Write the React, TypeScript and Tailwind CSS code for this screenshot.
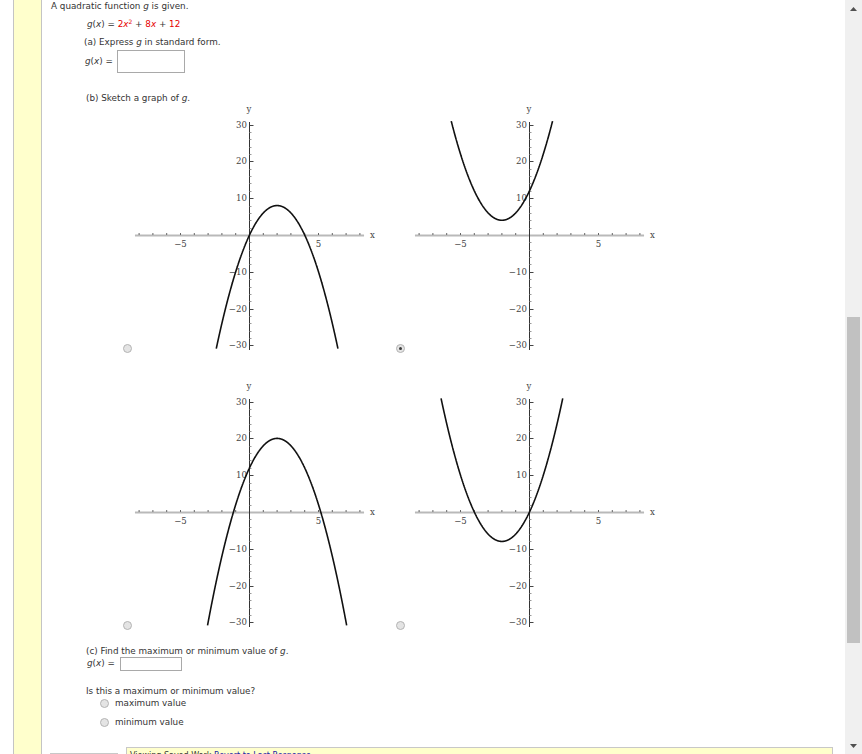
import React from "react";

type Fn = (x: number) => number;

// graph scale, read off the reference: 13.8px per x unit, 3.68px per y unit
const SX = 13.8;
const SY = 3.68;
const OX = 117.5;
const OY = 131;

const g1: Fn = (x) => -2 * x * x + 8 * x;
const g2: Fn = (x) => 2 * (x + 2) * (x + 2) + 4;
const g3: Fn = (x) => -2 * (x - 2) * (x - 2) + 20;
const g4: Fn = (x) => 2 * (x + 2) * (x + 2) - 8;

function curvePath(f: Fn) {
  const pts: string[] = [];
  for (let i = -840; i <= 840; i++) {
    const x = i / 100;
    const y = f(x);
    if (Math.abs(y) > 31) continue;
    pts.push(`${(OX + x * SX).toFixed(2)},${(OY - y * SY).toFixed(2)}`);
  }
  return "M" + pts.join("L");
}

function Graph({ f, className = "" }: { f: Fn; className?: string }) {
  const xTicks = [-8, -7, -6, -5, -4, -3, -2, -1, 1, 2, 3, 4, 5, 6, 7, 8];
  const yTicks: number[] = [];
  for (let v = -30; v <= 30; v += 2) if (v !== 0) yTicks.push(v);
  const yLabels = [30, 20, 10, -10, -20, -30];
  const font = "'DejaVu Serif', serif";

  return (
    <svg width={250} height={258} className={`block shrink-0 ${className}`}>
      {/* x axis */}
      <line x1={OX - 8.3 * SX} x2={OX + 8.3 * SX} y1={OY + 0.5} y2={OY + 0.5} stroke="#b9b9b9" strokeWidth={2} />
      {xTicks.map((v) => (
        <line key={v} x1={OX + v * SX} x2={OX + v * SX} y1={OY - 2} y2={OY} stroke="#666" strokeWidth={1} />
      ))}
      <text x={OX - 5 * SX} y={OY + 12} textAnchor="middle" fontFamily={font} fontSize={8.6} fill="#444">
        −5
      </text>
      <text x={OX + 5 * SX} y={OY + 12} textAnchor="middle" fontFamily={font} fontSize={8.6} fill="#444">
        5
      </text>
      <text x={OX + 120.5} y={OY + 3} fontFamily={font} fontSize={8.6} fill="#444">
        x
      </text>

      {/* y axis */}
      <line x1={OX} x2={OX} y1={OY - 113} y2={OY + 115} stroke="#333" strokeWidth={1} />
      {yTicks.map((v) => {
        const major = v % 10 === 0;
        return (
          <line
            key={v}
            x1={OX}
            x2={OX + (major ? 4 : 2)}
            y1={Math.round(OY - v * SY) + 0.5}
            y2={Math.round(OY - v * SY) + 0.5}
            stroke={major ? "#444" : "#999"}
            strokeWidth={1}
          />
        );
      })}
      {yLabels.map((v) => (
        <text key={v} x={OX - 2.5} y={OY - v * SY + 3} textAnchor="end" fontFamily={font} fontSize={8.6} fill="#444">
          {v < 0 ? `−${-v}` : v}
        </text>
      ))}
      <text x={OX - 0.5} y={OY - 123.5} textAnchor="middle" fontFamily={font} fontSize={8.6} fill="#444">
        y
      </text>

      <path d={curvePath(f)} fill="none" stroke="#111" strokeWidth={1.6} />
    </svg>
  );
}

function Radio({ checked = false, className = "" }: { checked?: boolean; className?: string }) {
  return (
    <span
      className={`flex h-[9px] w-[9px] shrink-0 items-center justify-center rounded-full border border-[#b4b4b4] bg-[#e4e4e4] ${className}`}
    >
      {checked && <span className="h-[3px] w-[3px] rounded-full bg-[#3a3a3a]" />}
    </span>
  );
}

function Gx() {
  return (
    <>
      <i>g</i>(<i>x</i>) =
    </>
  );
}

function Scrollbar() {
  return (
    <div className="flex w-[17px] shrink-0 flex-col bg-[#f0f0f0]">
      <div className="flex h-[17px] items-center justify-center">
        <svg width="7" height="4">
          <polygon points="3.5,0 7,4 0,4" fill="#505050" />
        </svg>
      </div>
      <div className="ml-[2px] mt-[300px] h-[326px] w-[13px] bg-[#c1c1c1]" />
      <div className="flex-1" />
      <div className="flex h-[17px] items-center justify-center">
        <svg width="7" height="4">
          <polygon points="0,0 7,0 3.5,4" fill="#505050" />
        </svg>
      </div>
    </div>
  );
}

export default function App() {
  return (
    <div className="flex h-[754px] w-[862px] overflow-hidden bg-white font-['DejaVu_Sans',sans-serif] text-[8.8px] text-[#333]">
      <div className="w-[13px] shrink-0" />
      <div className="w-[29px] shrink-0 border-x border-[#c4c4c4] bg-[#ffffcc]" />

      <div className="min-w-0 flex-1 overflow-hidden">
        <p className="h-[12px] pl-[9px] leading-[12px]">
          A quadratic function <i>g</i> is given.
        </p>
        <p className="mt-[6px] h-[12px] pl-[45px] leading-[12px]">
          <Gx /> <span className="text-[#e60000]">2<i>x</i><sup className="text-[6px]">2</sup></span> +{" "}
          <span className="text-[#e60000]">8<i>x</i></span> + <span className="text-[#e60000]">12</span>
        </p>
        <p className="mt-[6px] h-[12px] pl-[42px] leading-[12px]">
          (a) Express <i>g</i> in standard form.
        </p>
        <div className="mt-[2px] flex h-[23px] items-center pl-[43px]">
          <span className="w-[32px] shrink-0">
            <Gx />
          </span>
          <span className="h-[23px] w-[68px] border border-[#a9a9a9] bg-white" />
        </div>
        <p className="mt-[19px] h-[12px] pl-[44px] leading-[12px]">
          (b) Sketch a graph of <i>g</i>.
        </p>

        <div className="flex items-end pl-[81px]">
          <Radio className="mb-[9px]" />
          <Graph f={g1} />
          <Radio checked className="mb-[9px] ml-[14px]" />
          <Graph f={g2} className="ml-[7px]" />
        </div>
        <div className="mt-[19px] flex items-end pl-[81px]">
          <Radio className="mb-[9px]" />
          <Graph f={g3} />
          <Radio className="mb-[9px] ml-[14px]" />
          <Graph f={g4} className="ml-[7px]" />
        </div>

        <p className="mt-[7px] h-[11px] pl-[44px] leading-[11px]">
          (c) Find the maximum or minimum value of <i>g</i>.
        </p>
        <div className="flex h-[14px] items-center pl-[45px]">
          <span className="w-[33px] shrink-0">
            <Gx />
          </span>
          <span className="h-[14px] w-[62px] border border-[#a9a9a9] bg-white" />
        </div>

        <p className="mt-[14px] h-[12px] pl-[44px] leading-[12px]">Is this a maximum or minimum value?</p>
        <div className="flex h-[12px] items-center pl-[58px]">
          <Radio />
          <span className="ml-[6px] leading-[12px]">maximum value</span>
        </div>
        <div className="mt-[7px] flex h-[12px] items-center pl-[58px]">
          <Radio />
          <span className="ml-[6px] leading-[12px]">minimum value</span>
        </div>

        <div className="mt-[19px] flex items-start">
          <div className="ml-[8px] mt-[6px] h-[10px] w-[68px] bg-[#c8c8c8]" />
          <div className="ml-[8px] h-[30px] w-[707px] border border-[#c8c8c8] bg-[#ffffcc] px-[3px] pt-[2px] text-[8px] leading-[12px]">
            Viewing Saved Work <span className="text-[#1a1aa6]">Revert to Last Response</span>
          </div>
        </div>
      </div>

      <Scrollbar />
    </div>
  );
}
